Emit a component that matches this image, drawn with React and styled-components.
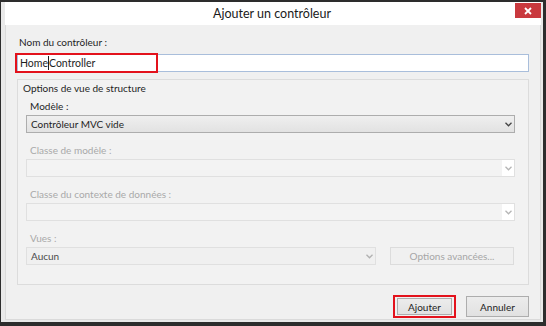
import React from "react";
import styled, { createGlobalStyle } from "styled-components";

const GlobalStyle = createGlobalStyle`
  html, body {
    margin: 0;
    padding: 0;
    background: #2d2d2d;
  }
  * { box-sizing: border-box; }
`;

const Frame = styled.div`
  width: 546px;
  height: 326px;
  background: #2d2d2d;
  padding: 2px 3px 4px 1px;
  font-family: Lato, "Noto Sans", sans-serif;
  font-size: 10px;
  color: #1e1e1e;
`;

const Window = styled.div`
  height: 100%;
  background: #e9e9e9;
  padding: 0 2px 2px 4px;
  display: flex;
  flex-direction: column;
`;

const TitleBar = styled.div`
  height: 23px;
  background: #ffffff;
  display: grid;
  grid-template-columns: 1fr auto 1fr;
  align-items: center;
`;

const Title = styled.div`
  grid-column: 2;
  font-size: 12.5px;
  color: #1a1a1a;
  padding-right: 2px;
`;

const CloseButton = styled.div`
  grid-column: 3;
  justify-self: end;
  align-self: start;
  margin-top: 1px;
  width: 26px;
  height: 15px;
  background: #c9393e;
  display: flex;
  align-items: center;
  justify-content: center;
`;

const Client = styled.div`
  flex: 1;
  background: #f0f0f0;
  border: 1px solid #dadada;
  border-top: none;
  padding: 10px 11px 0 11px;
  display: flex;
  flex-direction: column;
`;

const Label = styled.div`
  line-height: 14px;
  padding-left: ${p => p.$indent || 2}px;
  color: ${p => (p.$disabled ? "#a9a9a9" : "#1e1e1e")};
`;

const NameWrap = styled.div`
  position: relative;
  margin-top: 5px;
`;

const NameInput = styled.div`
  height: 18px;
  background: #ffffff;
  border: 1px solid #a9bedb;
  display: flex;
  align-items: center;
  padding-left: 2px;
  font-size: 10.5px;
`;

const Caret = styled.span`
  display: inline-block;
  width: 1px;
  height: 14px;
  background: #1e1e1e;
  vertical-align: middle;
`;

const Highlight = styled.div`
  position: absolute;
  left: -2px;
  top: -1px;
  width: 143px;
  height: 20px;
  border: 2px solid #e3121c;
  pointer-events: none;
`;

const Group = styled.div`
  margin-top: 7px;
  border: 1px solid #dcdcdc;
  background: #f2f2f2;
  padding: 0 13px 19px 8px;
`;

const GroupHeader = styled.div`
  line-height: 14px;
  margin: 1px 0 4px -3px;
`;

const Field = styled.div`
  margin-top: ${p => p.$gap}px;
  display: flex;
  flex-direction: column;
  gap: 2px;
`;

const Select = styled.div`
  height: ${p => p.$h || 18}px;
  width: ${p => (p.$w ? `${p.$w}px` : "100%")};
  display: flex;
  align-items: center;
  justify-content: space-between;
  padding-left: 4px;
  border: 1px solid ${p => (p.$variant === "active" ? "#adadad" : "#e0e0e0")};
  background: ${p =>
    p.$variant === "active"
      ? "linear-gradient(#efefef, #e2e2e2)"
      : p.$variant === "value"
      ? "#f0f0f0"
      : "#f3f3f3"};
  color: ${p => (p.$variant === "value" ? "#4a4a4a" : "#1e1e1e")};
`;

const Arrow = styled.div`
  width: 12px;
  height: 100%;
  display: flex;
  align-items: center;
  justify-content: center;
  background: ${p => (p.$white ? "#ffffff" : "transparent")};
`;

const Row = styled.div`
  display: flex;
  gap: 14px;
`;

const Button = styled.div`
  height: ${p => p.$h || 21}px;
  width: ${p => p.$w}px;
  display: flex;
  align-items: center;
  justify-content: center;
  border: 1px solid ${p => (p.$disabled ? "#dcdcdc" : "#adadad")};
  background: ${p => (p.$disabled ? "#f0f0f0" : "linear-gradient(#ececec, #e1e1e1)")};
  color: ${p => (p.$disabled ? "#a6a6a6" : "#1e1e1e")};
`;

const Footer = styled.div`
  margin-top: 10px;
  display: flex;
  justify-content: flex-end;
  align-items: center;
  gap: 10px;
`;

const Marked = styled.div`
  border: 2px solid #e3121c;
  padding: 1px 2px;
`;

const Chevron = ({ color }) => (
  <svg width="7" height="5" viewBox="0 0 7 5">
    <path d="M0.5 0.8 L3.5 3.8 L6.5 0.8" fill="none" stroke={color} strokeWidth="1.3" />
  </svg>
);

export default function App() {
  return (
    <>
      <GlobalStyle />
      <Frame>
        <Window>
          <TitleBar>
            <Title>Ajouter un contrôleur</Title>
            <CloseButton>
              <svg width="8" height="8" viewBox="0 0 8 8">
                <path d="M1 1 L7 7 M7 1 L1 7" stroke="#ffffff" strokeWidth="1.8" />
              </svg>
            </CloseButton>
          </TitleBar>
          <Client>
            <Label>Nom du contrôleur :</Label>
            <NameWrap>
              <NameInput>
                Home<Caret />Controller
              </NameInput>
              <Highlight />
            </NameWrap>
            <Group>
              <GroupHeader>Options de vue de structure</GroupHeader>
              <Field $gap={0}>
                <Label $indent={4}>Modèle :</Label>
                <Select $variant="active">
                  Contrôleur MVC vide
                  <Arrow>
                    <Chevron color="#444" />
                  </Arrow>
                </Select>
              </Field>
              <Field $gap={10}>
                <Label $indent={4} $disabled>Classe de modèle :</Label>
                <Select>
                  <span />
                  <Arrow $white>
                    <Chevron color="#b5b5b5" />
                  </Arrow>
                </Select>
              </Field>
              <Field $gap={10}>
                <Label $indent={4} $disabled>Classe du contexte de données :</Label>
                <Select>
                  <span />
                  <Arrow $white>
                    <Chevron color="#b5b5b5" />
                  </Arrow>
                </Select>
              </Field>
              <Field $gap={10}>
                <Label $indent={4} $disabled>Vues :</Label>
                <Row>
                  <Select $variant="value" $w={350}>
                    Aucun
                    <Arrow>
                      <Chevron color="#b0b0b0" />
                    </Arrow>
                  </Select>
                  <Button $disabled $w={124} $h={18}>Options avancées...</Button>
                </Row>
              </Field>
            </Group>
            <Footer>
              <Marked>
                <Button $w={55} $h={17}>Ajouter</Button>
              </Marked>
              <Button $w={63}>Annuler</Button>
            </Footer>
          </Client>
        </Window>
      </Frame>
    </>
  );
}
